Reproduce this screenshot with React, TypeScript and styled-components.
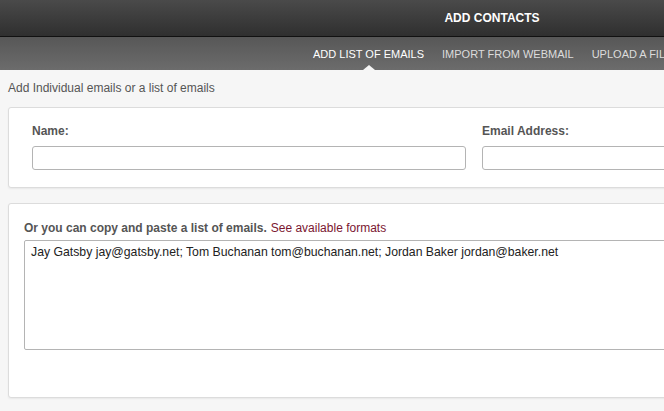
import * as React from 'react';
import styled, {createGlobalStyle} from 'styled-components';

const GlobalStyle = createGlobalStyle`
html, body {
  margin: 0;
  padding: 0;
  background: #f6f6f6;
  overflow: hidden;
}
body {
  font-family: "Liberation Sans", Arial, Helvetica, sans-serif;
}
`;

const Page = styled.div`
width: 984px;
min-height: 411px;
background: #f6f6f6;
`;

const TitleBar = styled.div`
height: 37px;
box-sizing: border-box;
display: flex;
align-items: center;
justify-content: center;
padding-bottom: 1px;
background: linear-gradient(#4a4a4a, #2f2f2f);
border-bottom: 1px solid #111;
color: #fff;
font-size: 12px;
font-weight: bold;
`;

const TabBar = styled.div`
height: 32px;
display: flex;
align-items: center;
gap: 18px;
padding: 1px 0 0 313px;
background: linear-gradient(#575757, #6c6c6c);
`;

const Tab = styled.div<{$active?: boolean}>`
position: relative;
height: 32px;
line-height: 32px;
font-size: 11px;
white-space: nowrap;
color: ${props => props.$active ? '#fff' : '#dcdcdc'};
&::after {
  content: '';
  display: ${props => props.$active ? 'block' : 'none'};
  position: absolute;
  left: 50%;
  bottom: 0;
  margin-left: -6px;
  border-left: 6px solid transparent;
  border-right: 6px solid transparent;
  border-bottom: 5px solid #f6f6f6;
}
`;

const Content = styled.div`
padding: 10px 0 0 8px;
display: flex;
flex-direction: column;
`;

const Intro = styled.div`
font-size: 12px;
color: #555;
line-height: 16px;
margin-bottom: 11px;
`;

const Card = styled.div<{$padX: number; $padTop: number}>`
background: #fff;
border: 1px solid #dcdcdc;
border-radius: 3px;
box-shadow: 0 1px 2px rgba(0, 0, 0, 0.06);
padding: ${props => props.$padTop}px ${props => props.$padX}px 0;
margin-bottom: 15px;
`;

const FieldRow = styled.div`
display: flex;
gap: 16px;
padding-bottom: 17px;
`;

const Field = styled.div<{$width: number}>`
width: ${props => props.$width}px;
display: flex;
flex-direction: column;
`;

const Label = styled.div<{$gap: number}>`
font-size: 12px;
font-weight: bold;
color: #555;
line-height: 14px;
margin-bottom: ${props => props.$gap}px;
`;

const LinkText = styled.a`
font-weight: normal;
color: #7b1630;
margin-left: 4px;
text-decoration: none;
`;

const Input = styled.input`
height: 24px;
box-sizing: border-box;
border: 1px solid #b4b4b4;
border-radius: 3px;
background: #fff;
font: 12px "Liberation Sans", Arial, sans-serif;
padding: 0 6px;
`;

const TextArea = styled.textarea`
display: block;
height: 110px;
width: 100%;
box-sizing: border-box;
border: 1px solid #b4b4b4;
border-radius: 2px;
padding: 4px 6px;
font: 12.25px "Liberation Sans", Arial, sans-serif;
color: #222;
resize: none;
margin-bottom: 47px;
outline: none;
`;

export default function App() {
  return <>
    <GlobalStyle/>
    <Page>
      <TitleBar>ADD CONTACTS</TitleBar>
      <TabBar>
        <Tab $active>ADD LIST OF EMAILS</Tab>
        <Tab>IMPORT FROM WEBMAIL</Tab>
        <Tab>UPLOAD A FILE</Tab>
      </TabBar>
      <Content>
        <Intro>Add Individual emails or a list of emails</Intro>
        <Card $padX={23} $padTop={16}>
          <FieldRow>
            <Field $width={434}>
              <Label $gap={8}>Name:</Label>
              <Input/>
            </Field>
            <Field $width={300}>
              <Label $gap={8}>Email Address:</Label>
              <Input/>
            </Field>
          </FieldRow>
        </Card>
        <Card $padX={15} $padTop={17}>
          <Label $gap={5}>
            Or you can copy and paste a list of emails.
            <LinkText href="#">See available formats</LinkText>
          </Label>
          <TextArea defaultValue="Jay Gatsby jay@gatsby.net; Tom Buchanan tom@buchanan.net; Jordan Baker jordan@baker.net"/>
        </Card>
      </Content>
    </Page>
  </>;
}
